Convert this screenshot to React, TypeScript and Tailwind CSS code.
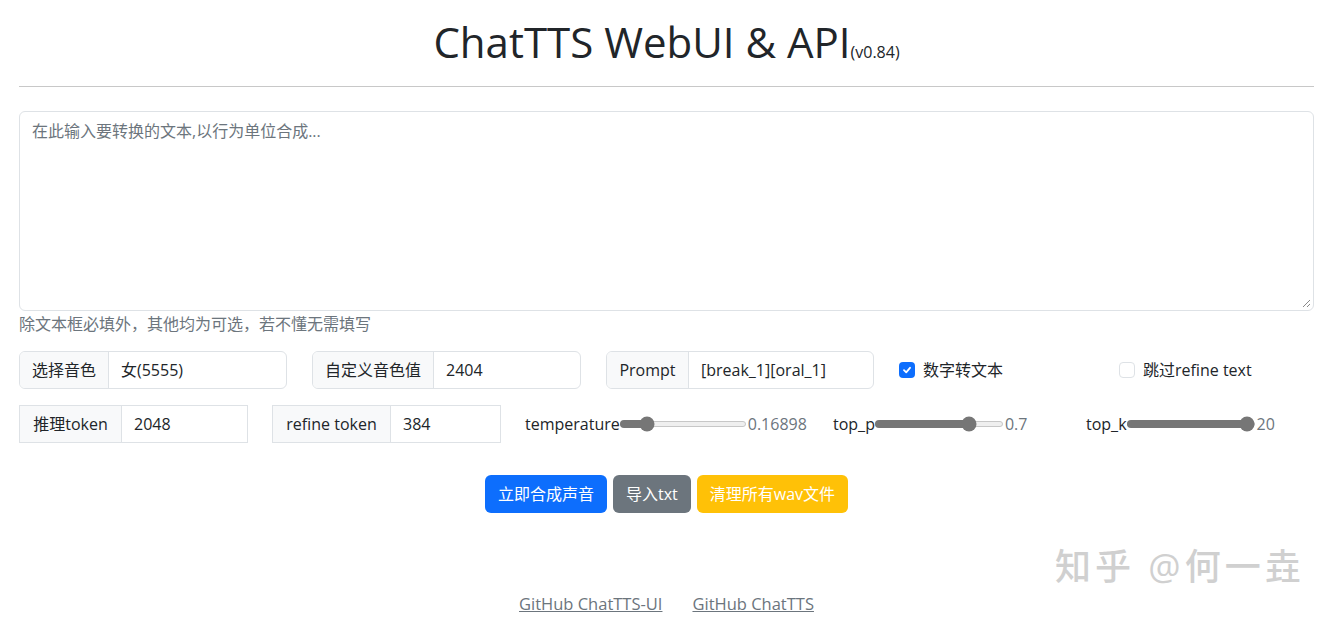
import React from 'react'

const font = { fontFamily: '"Open Sans", "Noto Sans CJK SC", sans-serif' }

function Group({ label, value, w, lw, rounded = true }: { label: string; value: string; w: string; lw: string; rounded?: boolean }) {
  return (
    <div className={`flex h-[38px] border border-[#dee2e6] ${rounded ? 'rounded-[6px]' : ''} ${w} overflow-hidden`}>
      <div className={`${lw} flex items-center justify-center bg-[#f8f9fa] border-r border-[#dee2e6] text-[16px] text-[#212529] shrink-0`}>
        {label}
      </div>
      <div className="flex items-center px-3 text-[16px] text-[#212529]">{value}</div>
    </div>
  )
}

// range input look: thumb stays inside the track
function Slider({ label, value, pct, w, tw }: { label: string; value: string; pct: number; w: string; tw: number }) {
  const left = 7.5 + (pct / 100) * (tw - 15)
  return (
    <div className={`flex items-center h-[38px] text-[16px] ${w}`}>
      <span className="text-[#212529]">{label}</span>
      <div className="relative h-[8px] shrink-0" style={{ width: tw }}>
        <div className="absolute left-0 right-0 top-[1px] bottom-[1px] rounded-full border border-[#c7c7c7] bg-[#efefef]" />
        <div className="absolute left-0 top-0 h-full rounded-full bg-[#767676]" style={{ width: left }} />
        <div
          className="absolute top-1/2 h-[15px] w-[15px] -translate-y-1/2 -translate-x-1/2 rounded-full bg-[#767676]"
          style={{ left }}
        />
      </div>
      <span className="ml-[2px] text-[#6c757d]">{value}</span>
    </div>
  )
}

export default function App() {
  return (
    <div className="relative min-h-screen bg-white text-[#212529]" style={font}>
      <div className="pl-[19px] pr-[18px]">
        <h1 className="pt-[15px] pb-[17px] text-center text-[42px] leading-[54px] font-normal">
          ChatTTS WebUI &amp; API<span className="text-[16px] leading-none">(v0.84)</span>
        </h1>
        <hr className="border-t border-[#c8c8c8]" />

        <div className="mt-[24px]">
          <div className="h-[200px] w-full rounded-[6px] border border-[#dee2e6] px-3 py-[7px] relative">
            <span className="text-[16px] text-[#6c757d]">在此输入要转换的文本,以行为单位合成...</span>
            <svg className="absolute right-[2px] bottom-[2px]" width="9" height="9" viewBox="0 0 9 9">
              <path d="M8 1 L1 8 M8 5 L5 8" stroke="#8a8a8a" strokeWidth="1" />
            </svg>
          </div>
          <div className="mt-[1px] text-[16px] leading-[24px] text-[#6c757d]">除文本框必填外，其他均为可选，若不懂无需填写</div>
        </div>

        <div className="mt-[15px] flex items-center">
          <Group label="选择音色" value="女(5555)" w="w-[268px]" lw="w-[89px]" />
          <div className="ml-[25px]">
            <Group label="自定义音色值" value="2404" w="w-[269px]" lw="w-[121px]" />
          </div>
          <div className="ml-[25px]">
            <Group label="Prompt" value="[break_1][oral_1]" w="w-[268px]" lw="w-[82px]" />
          </div>
          <label className="ml-[25px] flex items-center gap-[8px] text-[16px] w-[220px]">
            <span className="flex h-[16px] w-[16px] items-center justify-center rounded-[4px] bg-[#0d6efd]">
              <svg width="10" height="10" viewBox="0 0 10 10">
                <path d="M2 5.2 L4.2 7.3 L8 2.8" stroke="white" strokeWidth="1.8" fill="none" strokeLinecap="round" strokeLinejoin="round" />
              </svg>
            </span>
            数字转文本
          </label>
          <label className="flex items-center gap-[8px] text-[16px]">
            <span className="h-[16px] w-[16px] rounded-[4px] border border-[#dee2e6] bg-white" />
            跳过refine text
          </label>
        </div>

        <div className="mt-[16px] flex items-center">
          <Group label="推理token" value="2048" w="w-[229px]" lw="w-[102px]" rounded={false} />
          <div className="ml-[24px]">
            <Group label="refine token" value="384" w="w-[229px]" lw="w-[118px]" rounded={false} />
          </div>
          <div className="ml-[24px]">
            <Slider label="temperature" value="0.16898" pct={18} w="w-[308px]" tw={126} />
          </div>
          <Slider label="top_p" value="0.7" pct={77} w="w-[253px]" tw={128} />
          <Slider label="top_k" value="20" pct={100} w="w-[200px]" tw={128} />
        </div>

        <div className="mt-[32px] flex justify-center gap-[6px] text-[16px]">
          <button className="h-[38px] rounded-[6px] bg-[#0d6efd] px-[13px] text-white">立即合成声音</button>
          <button className="h-[38px] rounded-[6px] bg-[#6c757d] px-[13px] text-white">导入txt</button>
          <button className="h-[38px] rounded-[6px] bg-[#ffc107] px-[13px] text-white">清理所有wav文件</button>
        </div>

        <div className="mt-[79px] flex justify-center gap-[30px] text-[16.5px] text-[#6c757d]">
          <a className="underline">GitHub ChatTTS-UI</a>
          <a className="underline">GitHub ChatTTS</a>
        </div>
      </div>
      <div className="absolute left-[1055px] top-[540px] text-[36px] font-medium tracking-[4px] text-[#d0d0d0]">知乎 @何一垚</div>
    </div>
  )
}
